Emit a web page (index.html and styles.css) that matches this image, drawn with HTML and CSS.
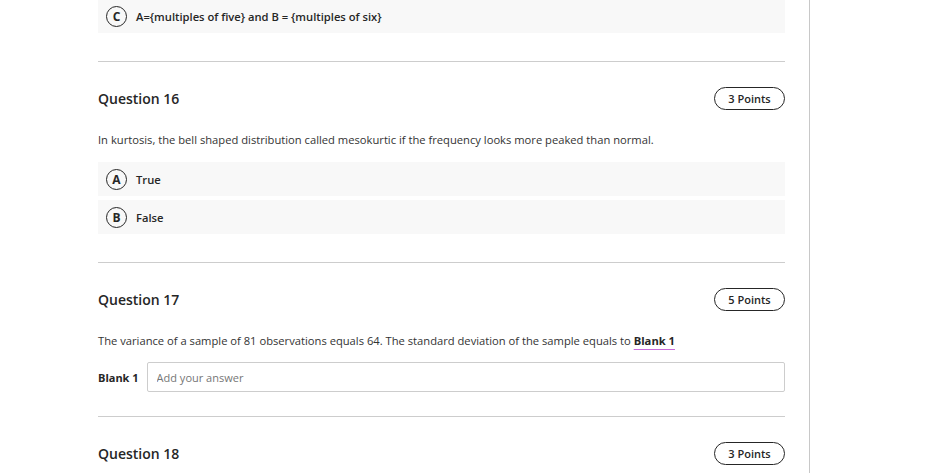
FILE: index.html
```html
<!DOCTYPE html>
<html lang="en">
<head>
    <meta charset="UTF-8">
    <meta name="viewport" content="width=device-width, initial-scale=1.0">
    <title>Test</title>
    <link rel="stylesheet" href="styles.css">
</head>
<body>
    <div class="page">
        <main class="main">
            <section class="question question-prev">
                <div class="options">
                    <div class="option">
                        <span class="letter">C</span>
                        <span class="option-text">A={multiples of five} and B = {multiples of six}</span>
                    </div>
                </div>
            </section>

            <section class="question">
                <div class="question-head">
                    <h2 class="question-title">Question 16</h2>
                    <span class="points">3 Points</span>
                </div>
                <p class="question-text">In kurtosis, the bell shaped distribution called mesokurtic if the frequency looks more peaked than normal.</p>
                <div class="options">
                    <div class="option">
                        <span class="letter">A</span>
                        <span class="option-text">True</span>
                    </div>
                    <div class="option">
                        <span class="letter">B</span>
                        <span class="option-text">False</span>
                    </div>
                </div>
            </section>

            <section class="question question-blank">
                <div class="question-head">
                    <h2 class="question-title">Question 17</h2>
                    <span class="points">5 Points</span>
                </div>
                <p class="question-text">The variance of a sample of 81 observations equals 64. The standard deviation of the sample equals to <span class="blank-ref">Blank 1</span></p>
                <div class="blank-row">
                    <label class="blank-label" for="blank1">Blank 1</label>
                    <input class="blank-input" id="blank1" type="text" placeholder="Add your answer">
                </div>
            </section>

            <section class="question">
                <div class="question-head">
                    <h2 class="question-title">Question 18</h2>
                    <span class="points">3 Points</span>
                </div>
            </section>
        </main>
        <aside class="sidebar"></aside>
    </div>
</body>
</html>
```

FILE: styles.css
```css
* {
    margin: 0;
    padding: 0;
    box-sizing: border-box;
}

body {
    font-family: 'Open Sans', 'Noto Sans', sans-serif;
    background: white;
    color: #262626;
    height: 473px;
    overflow: hidden;
}

.page {
    display: flex;
    min-height: 100vh;
    margin-top: -1px;
}

.main {
    width: 809px;
    padding: 0 24px 0 98px;
}

.sidebar {
    flex: 1;
    border-left: 1px solid #c8c8c8;
}

.question {
    padding: 24px 0 24px;
    border-bottom: 1px solid #cdcdcd;
}

.question-prev {
    padding-top: 0;
}

.question-head {
    display: flex;
    align-items: center;
    justify-content: space-between;
    height: 24px;
}

.question-title {
    font-size: 14px;
    font-weight: 600;
    color: #262626;
}

.points {
    display: inline-flex;
    align-items: center;
    justify-content: center;
    width: 71px;
    height: 23px;
    border: 1px solid #262626;
    border-radius: 12px;
    font-size: 11px;
    font-weight: 600;
}

.question-text {
    margin-top: 22px;
    font-size: 11.2px;
    line-height: 16px;
    color: #333;
}

.options {
    display: flex;
    flex-direction: column;
    gap: 4px;
    margin-top: 14px;
    margin-bottom: 4px;
}

.question-prev .options {
    margin-top: 0;
}

.option {
    display: flex;
    align-items: center;
    gap: 9px;
    height: 34px;
    padding-left: 8px;
    background: #f8f8f8;
}

.letter {
    display: inline-flex;
    flex-shrink: 0;
    align-items: center;
    justify-content: center;
    width: 21px;
    height: 21px;
    border: 1px solid #262626;
    border-radius: 50%;
    font-size: 12px;
    font-weight: 700;
}

.option-text {
    font-size: 11.2px;
    font-weight: 600;
    color: #262626;
}

.blank-ref {
    font-weight: 700;
    color: #262626;
    text-decoration: underline;
    text-decoration-color: #c86bd9;
    text-decoration-thickness: 1px;
    text-underline-offset: 4px;
}

.blank-row {
    display: flex;
    align-items: center;
    gap: 8px;
    margin-top: 13px;
}

.blank-label {
    font-size: 11px;
    font-weight: 700;
}

.blank-input {
    flex: 1;
    height: 30px;
    border: 1px solid #cdcdcd;
    border-radius: 2px;
    padding: 0 9px;
    font-family: inherit;
    font-size: 11px;
    color: #262626;
}

.blank-input::placeholder {
    color: #767676;
}
```
